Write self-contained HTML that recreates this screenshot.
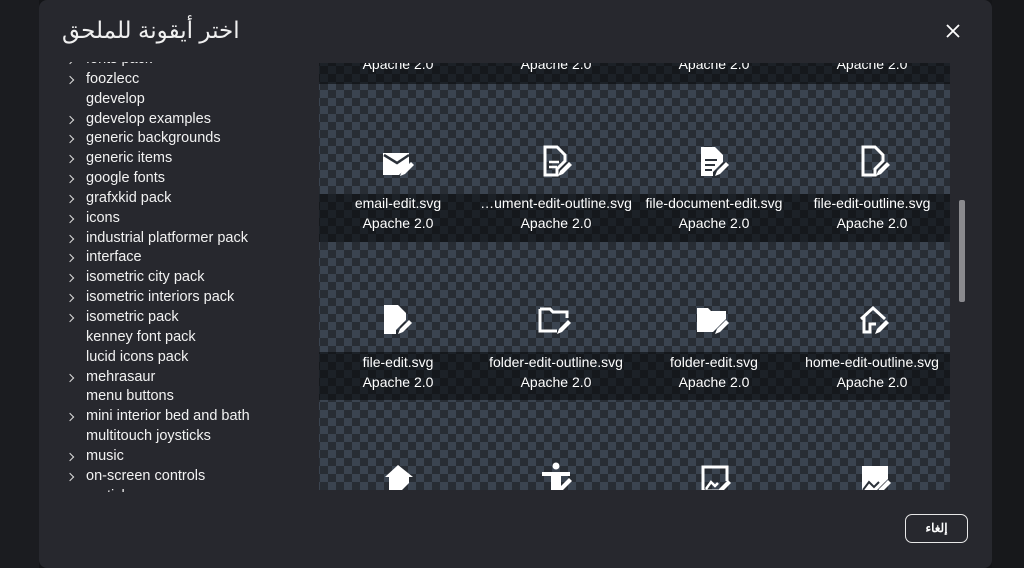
<!DOCTYPE html>
<html><head><meta charset="utf-8"><style>
*{margin:0;padding:0;box-sizing:border-box}
body{width:1024px;height:568px;background:#141518;overflow:hidden;font-family:"Liberation Sans","Noto Sans CJK SC",sans-serif;position:relative;color:#fff}
.bgl{position:absolute;left:0;top:0;width:39px;height:568px;background:#1b1c20}
.bgr{position:absolute;left:992px;top:0;width:32px;height:568px;background:#17181b}
.modal{position:absolute;left:39px;top:0;width:953px;height:568px;background:#27282e;border-radius:8px}
.title{position:absolute;left:62px;top:17px;font-size:23px;color:#f0f0f0;direction:rtl;width:180px;text-align:left}
.close{position:absolute;left:944px;top:22px}
.list{position:absolute;left:62px;width:250px;height:442px;overflow:hidden;font-size:14.5px;color:#f2f2f2;clip-path:inset(12px 0 0 0)}
.list div{height:19.85px;line-height:19.85px;padding-left:24px;position:relative;white-space:nowrap}
.list div.c:before{content:"";position:absolute;left:5px;top:7px;width:5px;height:5px;border-right:1.6px solid #ddd;border-top:1.6px solid #ddd;transform:rotate(45deg)}
.grid{position:absolute;left:319px;top:63px;width:631px;height:427px;overflow:hidden;
background-color:#282d34;background-image:conic-gradient(#3b4450 25%,transparent 0 50%,#3b4450 0 75%,transparent 0);background-size:16px 16px;background-position:1px 3px}
.band{position:absolute;left:0;width:631px;height:48px;background:rgba(10,11,14,.62)}
.lab{position:absolute;width:158px;text-align:center;font-size:14px;line-height:20px;white-space:nowrap;overflow:hidden}
.sb{position:absolute;left:958px;top:63px;width:8px;height:427px;background:#27282e}
.sbt{position:absolute;left:959px;top:200px;width:6px;height:102px;background:#8a8a8e;border-radius:2px}
.btn{position:absolute;left:905px;top:514px;width:63px;height:29px;border:1.5px solid #e8e8e8;border-radius:7px;font-size:12px;font-weight:bold;text-align:center;line-height:26px}
</style></head><body>
<div class="bgl"></div><div class="bgr"></div>
<div class="modal"></div>
<div class="title">اختر أيقونة للملحق</div>
<svg class="close" width="18" height="18" viewBox="0 0 18 18"><path d="M3 3L15 15M15 3L3 15" stroke="#fff" stroke-width="1.8"/></svg>
<div class="list" style="top:50px">
<div class="c">fonts pack</div>
<div class="c">foozlecc</div>
<div>gdevelop</div>
<div class="c">gdevelop examples</div>
<div class="c">generic backgrounds</div>
<div class="c">generic items</div>
<div class="c">google fonts</div>
<div class="c">grafxkid pack</div>
<div class="c">icons</div>
<div class="c">industrial platformer pack</div>
<div class="c">interface</div>
<div class="c">isometric city pack</div>
<div class="c">isometric interiors pack</div>
<div class="c">isometric pack</div>
<div>kenney font pack</div>
<div>lucid icons pack</div>
<div class="c">mehrasaur</div>
<div>menu buttons</div>
<div class="c">mini interior bed and bath</div>
<div>multitouch joysticks</div>
<div class="c">music</div>
<div class="c">on-screen controls</div>
<div class="c">particles</div>
</div>
<div class="grid">
<div class="band" style="top:-27px"></div>
<div class="band" style="top:131px"></div>
<div class="band" style="top:289px"></div>
<div class="lab" style="left:0;top:-9px">Apache 2.0</div>
<div class="lab" style="left:158px;top:-9px">Apache 2.0</div>
<div class="lab" style="left:316px;top:-9px">Apache 2.0</div>
<div class="lab" style="left:474px;top:-9px">Apache 2.0</div>

<svg style="position:absolute;left:62px;top:86px" width="34" height="30" viewBox="0 0 34 30"><path d="M2 4h26v12l-10 10H2z" fill="#fff"/><path d="M3 6l13 8 12-8" stroke="#2b3139" stroke-width="2.5" fill="none"/><path d="M19 27l2-5 9-9 3 3-9 9z" fill="#fff"/></svg>
<svg style="position:absolute;left:222px;top:82px" width="34" height="34" viewBox="0 0 34 34"><path d="M4 2h12l8 8v6l-8 8v6H4z" fill="none" stroke="#fff" stroke-width="3"/><path d="M8 17h10M8 22h8" stroke="#fff" stroke-width="2.5"/><path d="M17 31l2-5 9-9 3 3-9 9z" fill="#fff"/></svg>
<svg style="position:absolute;left:380px;top:82px" width="34" height="34" viewBox="0 0 34 34"><path d="M2 2h14l8 8v7l-10 10v4H2z" fill="#fff"/><path d="M6 15h12M6 20h10M6 25h7" stroke="#2b3139" stroke-width="2"/><path d="M16 31l2-5 9-9 3 3-9 9z" fill="#fff"/></svg>
<svg style="position:absolute;left:540px;top:82px" width="34" height="34" viewBox="0 0 34 34"><path d="M4 2h12l8 8v6l-8 8v6H4z" fill="none" stroke="#fff" stroke-width="3"/><path d="M17 31l2-5 9-9 3 3-9 9z" fill="#fff"/></svg>
<div class="lab" style="left:0;top:130px">email-edit.svg</div>
<div class="lab" style="left:158px;top:130px">…ument-edit-outline.svg</div>
<div class="lab" style="left:316px;top:130px">file-document-edit.svg</div>
<div class="lab" style="left:474px;top:130px">file-edit-outline.svg</div>
<div class="lab" style="left:0;top:150px">Apache 2.0</div>
<div class="lab" style="left:158px;top:150px">Apache 2.0</div>
<div class="lab" style="left:316px;top:150px">Apache 2.0</div>
<div class="lab" style="left:474px;top:150px">Apache 2.0</div>

<svg style="position:absolute;left:63px;top:240px" width="34" height="34" viewBox="0 0 34 34"><path d="M2 2h14l8 8v7l-10 10v4H2z" fill="#fff"/><path d="M16 31l2-5 9-9 3 3-9 9z" fill="#fff"/></svg>
<svg style="position:absolute;left:218px;top:242px" width="38" height="32" viewBox="0 0 38 32"><path d="M3 4h10l3 3h14v6M20 26H3V4" fill="none" stroke="#fff" stroke-width="3"/><path d="M20 29l2-5 9-9 3 3-9 9z" fill="#fff"/></svg>
<svg style="position:absolute;left:376px;top:242px" width="38" height="32" viewBox="0 0 38 32"><path d="M2 3h11l3 3h15v8L18 27H2z" fill="#fff"/><path d="M20 29l2-5 9-9 3 3-9 9z" fill="#fff"/></svg>
<svg style="position:absolute;left:538px;top:242px" width="36" height="32" viewBox="0 0 36 32"><path d="M4 14L16 3l12 11M7 12v15h6v-8h6" fill="none" stroke="#fff" stroke-width="3"/><path d="M18 29l2-5 9-9 3 3-9 9z" fill="#fff"/></svg>
<div class="lab" style="left:0;top:289px">file-edit.svg</div>
<div class="lab" style="left:158px;top:289px">folder-edit-outline.svg</div>
<div class="lab" style="left:316px;top:289px">folder-edit.svg</div>
<div class="lab" style="left:474px;top:289px">home-edit-outline.svg</div>
<div class="lab" style="left:0;top:309px">Apache 2.0</div>
<div class="lab" style="left:158px;top:309px">Apache 2.0</div>
<div class="lab" style="left:316px;top:309px">Apache 2.0</div>
<div class="lab" style="left:474px;top:309px">Apache 2.0</div>

<svg style="position:absolute;left:63px;top:400px" width="34" height="34" viewBox="0 0 34 34"><path d="M16 2L3 14h4v16h10l10-10v-6h4z" fill="#fff"/></svg>
<svg style="position:absolute;left:221px;top:398px" width="34" height="34" viewBox="0 0 34 34"><circle cx="16" cy="5" r="3.5" fill="#fff"/><path d="M2 11h28v4h-9v16h-10V15H2z" fill="#fff"/><path d="M18 31l2-5 9-9 3 3-9 9z" fill="#fff"/></svg>
<svg style="position:absolute;left:380px;top:400px" width="34" height="34" viewBox="0 0 34 34"><path d="M20 28H4V4h24v14" fill="none" stroke="#fff" stroke-width="3"/><path d="M7 26l5-7 4 4 3-3" stroke="#fff" stroke-width="2.5" fill="none"/><path d="M18 31l2-5 9-9 3 3-9 9z" fill="#fff"/></svg>
<svg style="position:absolute;left:540px;top:400px" width="34" height="34" viewBox="0 0 34 34"><path d="M3 3h26v13L15 30H3z" fill="#fff"/><path d="M4 27l6-8 5 5 5-5" stroke="#2b3139" stroke-width="2" fill="none"/><path d="M18 31l2-5 9-9 3 3-9 9z" fill="#fff"/></svg>
</div>
<div class="sb"></div><div class="sbt"></div>
<div class="btn">إلغاء</div>
</body></html>
